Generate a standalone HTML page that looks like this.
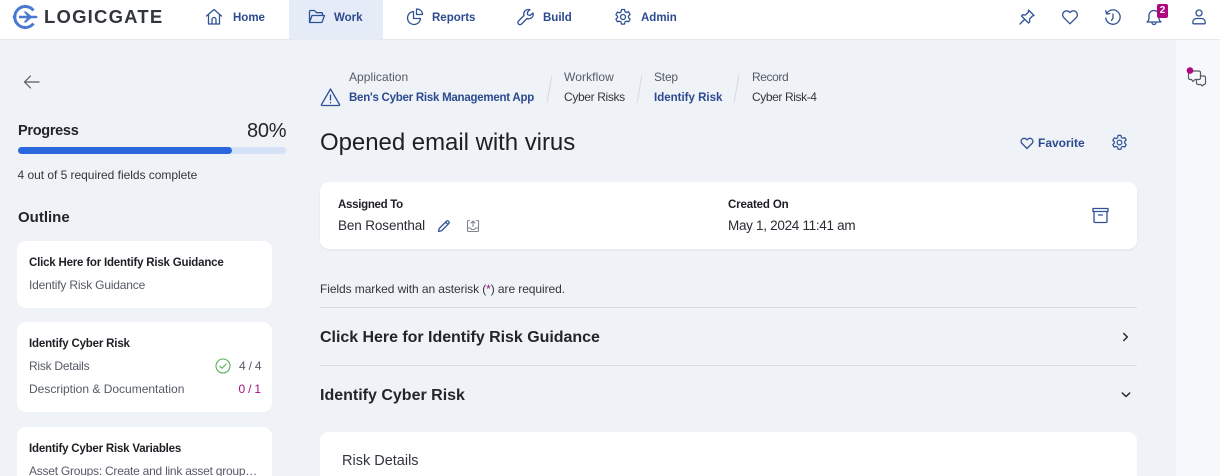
<!DOCTYPE html>
<html><head><meta charset="utf-8"><style>
html,body{margin:0;padding:0;width:1220px;height:476px;overflow:hidden}
body{position:relative;background:#eff2f7;font-family:"Liberation Sans",sans-serif;color:#1d1f24}
#w{position:absolute;left:0;top:0;width:1220px;height:476px;overflow:hidden}
.t{position:absolute;white-space:nowrap;line-height:20px;height:20px}
.b{font-weight:700}
.nav{color:#2b4a8f;font-size:11.5px;font-weight:700}
.g{color:#555a66}
.box{position:absolute;background:#fff;border-radius:9px}
.sep{position:absolute;top:75px;width:1px;height:28px;background:#d5d8de;transform:rotate(10deg)}
svg{position:absolute;fill:none;stroke-linecap:round;stroke-linejoin:round}
.i{stroke:#2f5296;stroke-width:1.3}
</style></head><body><div id="w">
<div style="position:absolute;left:0;top:0;width:1220px;height:39px;background:#fff;border-bottom:1px solid #e6e9ee"></div>
<div style="position:absolute;left:289px;top:0;width:94px;height:39px;background:#e6ecf7"></div>
<div style="position:absolute;left:1176px;top:40px;width:44px;height:436px;background:#f7f8fb"></div>

<svg style="left:11px;top:3px" width="28" height="28" viewBox="0 0 28 28"><path d="M22.500 7.500A10.500 10.500 0 1 0 22.500 20.500" stroke="#4a78d0" stroke-width="3" stroke-linecap="butt"/><circle cx="3.500" cy="14" r="1.800" fill="#4a78d0"/><circle cx="14" cy="3.300" r="1.500" fill="#4a78d0"/><circle cx="14" cy="24.700" r="1.500" fill="#4a78d0"/><path d="M8 12.800h8L12.500 8.500h2.500l5 4.300h4.500q2 .1 2 1.200t-2 1.200H20l-5 4.300h-2.500l3.500-4.300H8z" fill="#4a78d0"/></svg>
<div class="t b" style="left:44px;top:7px;font-size:18.500px;letter-spacing:1.200px;color:#33363d">LOGICGATE</div>

<svg class="i" style="left:205px;top:8px" width="18" height="18" viewBox="0 0 18 18"><path d="M1.500 8 9 1.500 16.500 8M3.500 6.500V16h11V6.500M7 16v-4.500a2 2 0 0 1 4 0V16"/></svg>
<div class="t nav" style="left:233px;top:8px">Home</div>
<svg class="i" style="left:308px;top:8px" width="18" height="18" viewBox="0 0 18 18"><path d="M1.500 14.500V3.500a1 1 0 0 1 1-1h4l2 2.200h5a1 1 0 0 1 1 1V7M1.500 14.500 4 7.500h12.500l-2.300 6.200a1 1 0 0 1-1 .8z"/></svg>
<div class="t nav" style="left:334px;top:8px">Work</div>
<svg class="i" style="left:406px;top:8px" width="18" height="18" viewBox="0 0 18 18"><path d="M7.500 3.500a6.500 6.500 0 1 0 7 7H7.500zM10.500 1v5.500H16.500A5.500 5.500 0 0 0 10.500 1z"/></svg>
<div class="t nav" style="left:432px;top:8px">Reports</div>
<svg class="i" style="left:517px;top:8px" width="18" height="18" viewBox="0 0 18 18"><path d="M11 1.500a4.500 4.500 0 0 0-4 6L1.500 13a2 2 0 0 0 3 3L10 10.500a4.500 4.500 0 0 0 6-5.500l-3 2.500-2.500-1V4l2.500-2.300a5 5 0 0 0-2-.2z"/></svg>
<div class="t nav" style="left:543px;top:8px">Build</div>
<svg class="i" style="left:614px;top:8px" width="18" height="18" viewBox="0 0 18 18"><circle cx="9" cy="9" r="2.500"/><path d="M7.500 1.500h3l.5 2.200 1.500.8 2.100-.7 1.500 2.600-1.600 1.500v1.800l1.600 1.500-1.500 2.600-2.100-.7-1.500.8-.5 2.200h-3l-.5-2.200-1.500-.8-2.100.7-1.500-2.600 1.600-1.500V8.200L1.900 6.700l1.500-2.600 2.100.7L7 4z"/></svg>
<div class="t nav" style="left:641px;top:8px">Admin</div>

<svg class="i" style="left:1018px;top:8px" width="18" height="18" viewBox="0 0 18 18"><path d="M2 16l4.500-4.500M10.500 2l5.500 5.500-1.500.5-3 3 .2 3-1.200 1L3.500 8l1-1.200 3 .2 3-3z"/></svg>
<svg class="i" style="left:1061px;top:8px" width="18" height="18" viewBox="0 0 18 18"><path d="M9 15.800 2.800 9.700a4 4 0 0 1 0-5.700 4 4 0 0 1 5.700 0l.5.600.5-.6a4 4 0 0 1 5.700 0 4 4 0 0 1 0 5.700z"/></svg>
<svg class="i" style="left:1104px;top:9px" width="18" height="18" viewBox="0 0 18 18"><path d="M3 4A7.200 7.200 0 1 1 1.800 9M1.800 1.800l.8 3.200 3.200-.4M9 5v4l-1.500 2.500"/></svg>
<svg class="i" style="left:1145px;top:8px" width="18" height="18" viewBox="0 0 18 18"><path d="M2 14c1.500-1 2-2 2-4V7.500a5 5 0 0 1 10 0V10c0 2 .5 3 2 4zM7 14.500a2 2 0 0 0 4 0"/></svg>
<div style="position:absolute;left:1157px;top:4px;width:11px;height:14px;background:#b0067f;border-radius:2px;color:#fff;font-size:10px;font-weight:700;line-height:14px;text-align:center">2</div>
<svg class="i" style="left:1190px;top:8px" width="18" height="18" viewBox="0 0 18 18"><circle cx="9" cy="5" r="3"/><path d="M2.800 14.500c0-2.700 1.800-4 3.700-4h5c1.900 0 3.700 1.300 3.700 4 0 .8-.4 1.300-1 1.300H3.800c-.6 0-1-.5-1-1.300z"/></svg>

<svg style="left:1186px;top:66px" width="22" height="24" viewBox="0 0 22 24"><path d="M4 5h9a1.500 1.500 0 0 1 1.500 1.500V12a1.500 1.500 0 0 1-1.500 1.500H9l-2 2-1.500-2H4A1.500 1.500 0 0 1 2.500 12V6.500A1.500 1.500 0 0 1 4 5zM15 10h3a1.500 1.500 0 0 1 1.500 1.500V17a1.500 1.500 0 0 1-1.500 1.500h-.5L16.500 20l-2-1.500H12A1.500 1.500 0 0 1 10.500 17v-3" stroke="#555a66" stroke-width="1.200"/><circle cx="4" cy="4.500" r="3.300" fill="#b0067f"/></svg>

<svg style="left:23px;top:73px" width="18" height="18" viewBox="0 0 18 18" stroke="#555a66" stroke-width="1.200"><path d="M1.500 9H16M7.500 3 1.500 9l6 6"/></svg>
<div class="t b" style="left:18px;top:121px;font-size:14.500px;letter-spacing:-.3px;color:#23252b">Progress</div>
<div class="t" style="left:247px;top:121px;font-size:20px;letter-spacing:-.25px;color:#23252b">80%</div>
<div style="position:absolute;left:18px;top:147px;width:268px;height:7px;background:#d5e1f6;border-radius:4px"></div>
<div style="position:absolute;left:18px;top:147px;width:214px;height:7px;background:#2b68de;border-radius:4px"></div>
<div class="t" style="left:17.500px;top:165px;font-size:12px;letter-spacing:-.03px;color:#33363d">4 out of 5 required fields complete</div>
<div class="t b" style="left:18px;top:208px;font-size:15px;color:#23252b">Outline</div>

<div class="box" style="left:17px;top:241px;width:255px;height:67px"></div>
<div class="t b" style="left:29px;top:253px;font-size:11.500px;letter-spacing:-.2px">Click Here for Identify Risk Guidance</div>
<div class="t g" style="left:29px;top:275px;font-size:12px;letter-spacing:-.18px">Identify Risk Guidance</div>
<div class="box" style="left:17px;top:322px;width:255px;height:90px"></div>
<div class="t b" style="left:29px;top:334px;font-size:11.500px;letter-spacing:-.18px">Identify Cyber Risk</div>
<div class="t g" style="left:29px;top:356px;font-size:12px;letter-spacing:-.25px">Risk Details</div>
<svg style="left:215px;top:358px" width="16" height="16" viewBox="0 0 16 16" stroke="#5cae5c" stroke-width="1.100"><circle cx="8" cy="8" r="7"/><path d="M4.800 8.200 7 10.300l4.200-4.300"/></svg>
<div class="t g" style="left:239px;top:356px;font-size:12px;letter-spacing:-.2px">4 / 4</div>
<div class="t g" style="left:29px;top:379px;font-size:12px">Description &amp; Documentation</div>
<div class="t" style="left:238.500px;top:379px;font-size:12px;letter-spacing:-.2px;color:#a0107a">0 / 1</div>
<div class="box" style="left:17px;top:427px;width:255px;height:70px"></div>
<div class="t b" style="left:29px;top:439px;font-size:11.500px;letter-spacing:-.2px">Identify Cyber Risk Variables</div>
<div class="t g" style="left:29px;top:461px;font-size:12px;letter-spacing:-.24px">Asset Groups: Create and link asset group…</div>

<div class="t g" style="left:349px;top:67px;font-size:12px;letter-spacing:.05px">Application</div>
<svg class="i" style="left:320px;top:87px" width="21" height="20" viewBox="0 0 21 20"><path d="M10.500 2 1.500 17.500a.6.6 0 0 0 .5 1h17a.6.6 0 0 0 .5-1zM10.500 8v5M10.500 15.500v.3"/></svg>
<div class="t b" style="left:349px;top:88px;font-size:11.500px;color:#2b4a8f;letter-spacing:-.25px">Ben's Cyber Risk Management App</div>
<div class="sep" style="left:549px"></div>
<div class="t g" style="left:564px;top:67px;font-size:12px;letter-spacing:.1px">Workflow</div>
<div class="t" style="left:564px;top:87px;font-size:12px;letter-spacing:-.35px;color:#33363d">Cyber Risks</div>
<div class="sep" style="left:639px"></div>
<div class="t g" style="left:654px;top:67px;font-size:12px;letter-spacing:-.2px">Step</div>
<div class="t b" style="left:654px;top:88px;font-size:11.500px;color:#2b4a8f">Identify Risk</div>
<div class="sep" style="left:736px"></div>
<div class="t g" style="left:752px;top:67px;font-size:12px;letter-spacing:-.4px">Record</div>
<div class="t" style="left:752px;top:87px;font-size:12px;letter-spacing:-.4px;color:#33363d">Cyber Risk-4</div>

<div class="t" style="left:320px;top:133px;font-size:24px;letter-spacing:-.04px;color:#1d1f24">Opened email with virus</div>
<svg class="i" style="left:1020px;top:136px" width="14" height="14" viewBox="0 0 14 14"><path d="M7 12.500 2 7.500a3 3 0 0 1 0-4.300 3 3 0 0 1 4.300 0l.7.700.7-.7a3 3 0 0 1 4.300 0 3 3 0 0 1 0 4.300z"/></svg>
<div class="t b" style="left:1038px;top:132.500px;font-size:12px;color:#2b4a8f">Favorite</div>
<svg class="i" style="left:1110.500px;top:133.500px" width="17" height="17" viewBox="0 0 18 18"><circle cx="9" cy="9" r="2.500"/><path d="M7.500 1.500h3l.5 2.200 1.500.8 2.100-.7 1.500 2.600-1.600 1.500v1.800l1.600 1.500-1.500 2.600-2.100-.7-1.500.8-.5 2.200h-3l-.5-2.200-1.500-.8-2.100.7-1.500-2.600 1.600-1.500V8.200L1.900 6.700l1.500-2.600 2.100.7L7 4z"/></svg>

<div class="box" style="left:320px;top:182px;width:817px;height:67px;box-shadow:0 1px 2px rgba(0,0,0,.06)"></div>
<div class="t b" style="left:338px;top:195px;font-size:11.500px;letter-spacing:-.3px">Assigned To</div>
<div class="t" style="left:338px;top:216px;font-size:13.500px;letter-spacing:-.12px;color:#2a2c33">Ben Rosenthal</div>
<svg class="i" style="left:437px;top:219px" width="14" height="14" viewBox="0 0 14 14"><path d="M1.500 12.500l.7-3L9.500 2.200a1.300 1.300 0 0 1 1.900 0l.4.400a1.300 1.300 0 0 1 0 1.900L4.500 11.800zM8.500 3.200l2.300 2.300"/></svg>
<svg style="left:466px;top:219px" width="14" height="14" viewBox="0 0 14 14" stroke="#80858f" stroke-width="1.100"><path d="M3.500 1.500h-1a1 1 0 0 0-1 1v9a1 1 0 0 0 1 1h9a1 1 0 0 0 1-1v-9a1 1 0 0 0-1-1h-1M1.500 9H4.500l1 1.500h3l1-1.500h3M7 7.500V2M5 4l2-2 2 2"/></svg>
<div class="t b" style="left:728px;top:195px;font-size:11.500px;letter-spacing:-.15px">Created On</div>
<div class="t" style="left:728px;top:216px;font-size:13.500px;letter-spacing:-.3px;color:#2a2c33">May 1, 2024 11:41 am</div>
<svg class="i" style="left:1092px;top:207px" width="17" height="17" viewBox="0 0 17 17"><path d="M1 1.500h15v3H1zM2 4.500v10a1 1 0 0 0 1 1h11a1 1 0 0 0 1-1v-10M6.500 8h4"/></svg>

<div class="t" style="left:320px;top:279px;font-size:12px;letter-spacing:-.08px;color:#33363d">Fields marked with an asterisk (<span style="color:#b0067f">*</span>) are required.</div>
<div style="position:absolute;left:320px;top:307px;width:817px;height:1px;background:#d9dce1"></div>
<div class="t b" style="left:320px;top:328px;font-size:16px;letter-spacing:-.03px;color:#23252b">Click Here for Identify Risk Guidance</div>
<svg style="left:1120px;top:331px" width="12" height="12" viewBox="0 0 12 12" stroke="#23252b" stroke-width="1.500"><path d="M3.800 2.500 7.300 6 3.800 9.500"/></svg>
<div style="position:absolute;left:320px;top:365px;width:817px;height:1px;background:#d9dce1"></div>
<div class="t b" style="left:320px;top:386px;font-size:16px;color:#23252b">Identify Cyber Risk</div>
<svg style="left:1120px;top:389px" width="12" height="12" viewBox="0 0 12 12" stroke="#23252b" stroke-width="1.500"><path d="M2.300 4 6 7.500 9.700 4"/></svg>
<div class="box" style="left:320px;top:432px;width:817px;height:60px"></div>
<div class="t" style="left:342px;top:451px;font-size:14.500px;color:#33363d">Risk Details</div>
</div></body></html>
